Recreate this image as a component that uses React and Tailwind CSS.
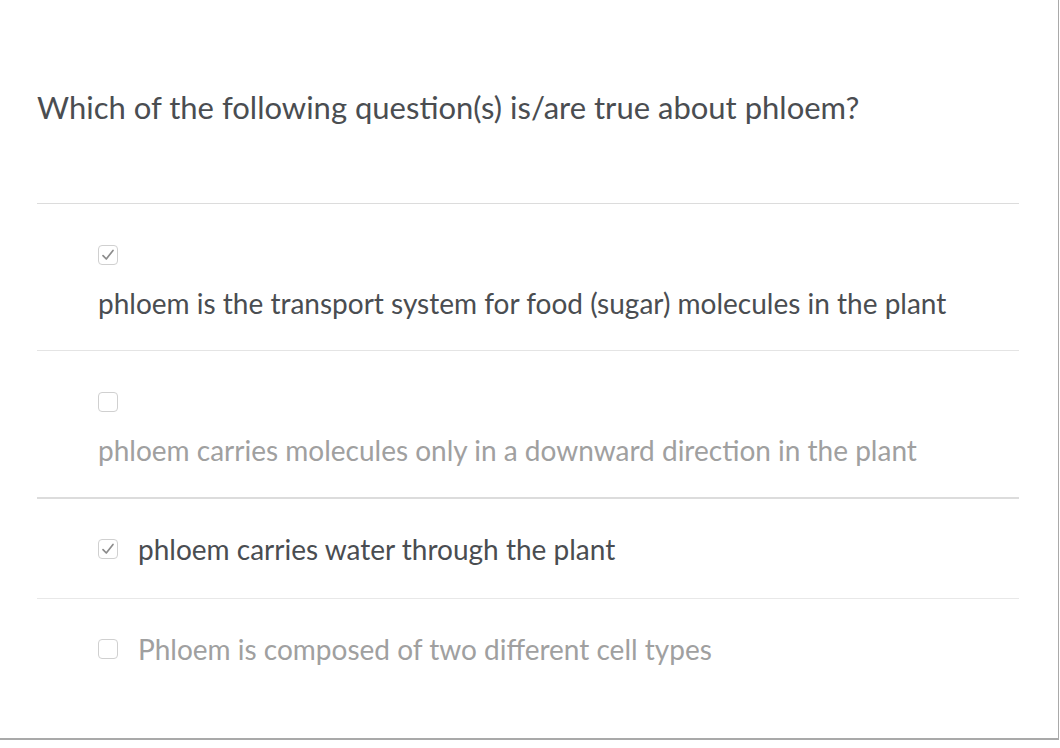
import React from 'react';

const Box = ({ checked }) => (
  <div className="w-[20px] h-[20px] rounded-[4px] border border-[#d0d0d0] flex items-center justify-center shrink-0 bg-white">
    {checked && (
      <svg width="16" height="16" viewBox="0 0 16 16" fill="none">
        <path d="M3 8.6 L6.3 12 L13 3.4" stroke="#8c8c8c" strokeWidth="1.7" strokeLinecap="round" strokeLinejoin="round" />
      </svg>
    )}
  </div>
);

const StackedOption = ({ checked, text, border }) => (
  <div className={`pl-[61px] pt-[41px] pb-[30px] ${border}`}>
    <Box checked={checked} />
    <div className={`mt-[21px] text-[28px] leading-[34px] ${checked ? 'text-[#4a4d51]' : 'text-[#a0a0a0]'}`}>{text}</div>
  </div>
);

const InlineOption = ({ checked, text, border }) => (
  <div className={`h-[100px] pl-[61px] flex items-center gap-[20px] ${border}`}>
    <Box checked={checked} />
    <div className={`text-[28px] leading-[34px] ${checked ? 'text-[#4a4d51]' : 'text-[#a0a0a0]'}`}>{text}</div>
  </div>
);

const App = () => {
  return (
    <div className="w-[1060px] h-[748px] bg-white" style={{ fontFamily: 'Lato, "Open Sans", sans-serif' }}>
      <div className="w-[1059px] h-[740px] border-r border-b-2 border-[#a9a9a9] bg-white">
        <div className="pl-[37px] pt-[89px] h-[203px]">
          <h1 className="text-[31px] leading-[36px] text-[#4a4d51]">Which of the following question(s) is/are true about phloem?</h1>
        </div>
        <div className="ml-[37px] w-[982px] border-t border-[#dcdcdc]">
          <StackedOption
            checked
            text="phloem is the transport system for food (sugar) molecules in the plant"
            border="border-b border-[#e4e4e4]"
          />
          <StackedOption
            checked={false}
            text="phloem carries molecules only in a downward direction in the plant"
            border="border-b-2 border-[#dcdcdc]"
          />
          <InlineOption
            checked
            text="phloem carries water through the plant"
            border="border-b border-[#e8e8e8]"
          />
          <InlineOption
            checked={false}
            text="Phloem is composed of two different cell types"
            border=""
          />
        </div>
      </div>
    </div>
  );
};

export default App;
